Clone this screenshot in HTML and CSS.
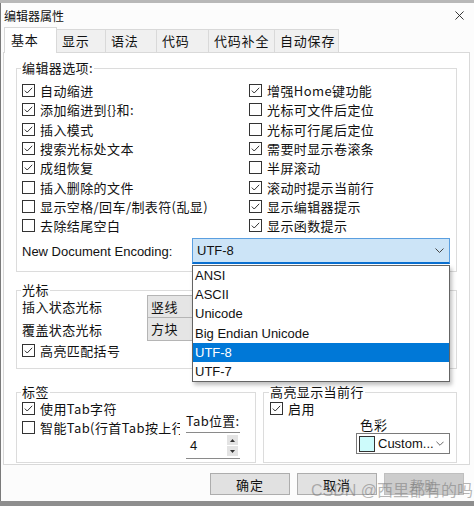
FILE: index.html
```html
<!DOCTYPE html>
<html lang="zh">
<head>
<meta charset="utf-8">
<title>编辑器属性</title>
<link rel="stylesheet" href="styles.css">
</head>
<body>
<div class="screen">
  <div class="topstrip"></div>
  <div class="dialog">
    <div class="titlebar">
      <span class="title">编辑器属性</span>
      <svg class="close" viewBox="0 0 10 10"><path d="M0.5 0.5L9.5 9.5M9.5 0.5L0.5 9.5" stroke="#222" stroke-width="1" fill="none"/></svg>
    </div>
    <div class="tabs">
      <div class="tab active t1">基本</div>
      <div class="tab t2">显示</div>
      <div class="tab t3">语法</div>
      <div class="tab t4">代码</div>
      <div class="tab t5">代码补全</div>
      <div class="tab t6">自动保存</div>
    </div>
    <div class="page">
      <fieldset class="grp g-editor">
        <legend>编辑器选项:</legend>
        <div class="checks">
          <label class="cbrow"><svg class="cb" viewBox="0 0 13 13"><rect x="0.5" y="0.5" width="12" height="12" fill="#fff" stroke="#333"/><path d="M2.8 6.6L5.2 9L10.2 3.8" fill="none" stroke="#333"/></svg>自动缩进</label>
          <label class="cbrow"><svg class="cb" viewBox="0 0 13 13"><rect x="0.5" y="0.5" width="12" height="12" fill="#fff" stroke="#333"/><path d="M2.8 6.6L5.2 9L10.2 3.8" fill="none" stroke="#333"/></svg>增强Home键功能</label>
          <label class="cbrow"><svg class="cb" viewBox="0 0 13 13"><rect x="0.5" y="0.5" width="12" height="12" fill="#fff" stroke="#333"/><path d="M2.8 6.6L5.2 9L10.2 3.8" fill="none" stroke="#333"/></svg>添加缩进到{}和:</label>
          <label class="cbrow"><svg class="cb" viewBox="0 0 13 13"><rect x="0.5" y="0.5" width="12" height="12" fill="#fff" stroke="#333"/></svg>光标可文件后定位</label>
          <label class="cbrow"><svg class="cb" viewBox="0 0 13 13"><rect x="0.5" y="0.5" width="12" height="12" fill="#fff" stroke="#333"/><path d="M2.8 6.6L5.2 9L10.2 3.8" fill="none" stroke="#333"/></svg>插入模式</label>
          <label class="cbrow"><svg class="cb" viewBox="0 0 13 13"><rect x="0.5" y="0.5" width="12" height="12" fill="#fff" stroke="#333"/></svg>光标可行尾后定位</label>
          <label class="cbrow"><svg class="cb" viewBox="0 0 13 13"><rect x="0.5" y="0.5" width="12" height="12" fill="#fff" stroke="#333"/><path d="M2.8 6.6L5.2 9L10.2 3.8" fill="none" stroke="#333"/></svg>搜索光标处文本</label>
          <label class="cbrow"><svg class="cb" viewBox="0 0 13 13"><rect x="0.5" y="0.5" width="12" height="12" fill="#fff" stroke="#333"/><path d="M2.8 6.6L5.2 9L10.2 3.8" fill="none" stroke="#333"/></svg>需要时显示卷滚条</label>
          <label class="cbrow"><svg class="cb" viewBox="0 0 13 13"><rect x="0.5" y="0.5" width="12" height="12" fill="#fff" stroke="#333"/><path d="M2.8 6.6L5.2 9L10.2 3.8" fill="none" stroke="#333"/></svg>成组恢复</label>
          <label class="cbrow"><svg class="cb" viewBox="0 0 13 13"><rect x="0.5" y="0.5" width="12" height="12" fill="#fff" stroke="#333"/></svg>半屏滚动</label>
          <label class="cbrow"><svg class="cb" viewBox="0 0 13 13"><rect x="0.5" y="0.5" width="12" height="12" fill="#fff" stroke="#333"/></svg>插入删除的文件</label>
          <label class="cbrow"><svg class="cb" viewBox="0 0 13 13"><rect x="0.5" y="0.5" width="12" height="12" fill="#fff" stroke="#333"/><path d="M2.8 6.6L5.2 9L10.2 3.8" fill="none" stroke="#333"/></svg>滚动时提示当前行</label>
          <label class="cbrow"><svg class="cb" viewBox="0 0 13 13"><rect x="0.5" y="0.5" width="12" height="12" fill="#fff" stroke="#333"/></svg>显示空格/回车/制表符(乱显)</label>
          <label class="cbrow"><svg class="cb" viewBox="0 0 13 13"><rect x="0.5" y="0.5" width="12" height="12" fill="#fff" stroke="#333"/><path d="M2.8 6.6L5.2 9L10.2 3.8" fill="none" stroke="#333"/></svg>显示编辑器提示</label>
          <label class="cbrow"><svg class="cb" viewBox="0 0 13 13"><rect x="0.5" y="0.5" width="12" height="12" fill="#fff" stroke="#333"/></svg>去除结尾空白</label>
          <label class="cbrow"><svg class="cb" viewBox="0 0 13 13"><rect x="0.5" y="0.5" width="12" height="12" fill="#fff" stroke="#333"/><path d="M2.8 6.6L5.2 9L10.2 3.8" fill="none" stroke="#333"/></svg>显示函数提示</label>
        </div>
        <div class="enc">
          <span class="enc-label">New Document Encoding:</span>
          <div class="select">
            <span>UTF-8</span>
            <svg class="chev" viewBox="0 0 9 5"><path d="M0.5 0.5L4.5 4.5L8.5 0.5" fill="none" stroke="#444"/></svg>
          </div>
        </div>
      </fieldset>

      <fieldset class="grp g-cursor">
        <legend>光标</legend>
        <div class="crow first">
          <span class="crow-label">插入状态光标</span>
          <div class="combo">竖线</div>
        </div>
        <div class="crow">
          <span class="crow-label">覆盖状态光标</span>
          <div class="combo">方块</div>
        </div>
        <label class="cbrow"><svg class="cb" viewBox="0 0 13 13"><rect x="0.5" y="0.5" width="12" height="12" fill="#fff" stroke="#333"/><path d="M2.8 6.6L5.2 9L10.2 3.8" fill="none" stroke="#333"/></svg>高亮匹配括号</label>
      </fieldset>

      <div class="bottom-groups">
        <fieldset class="grp g-tabs">
          <legend>标签</legend>
          <div class="tabs-body">
            <div class="tabs-left">
              <label class="cbrow"><svg class="cb" viewBox="0 0 13 13"><rect x="0.5" y="0.5" width="12" height="12" fill="#fff" stroke="#333"/><path d="M2.8 6.6L5.2 9L10.2 3.8" fill="none" stroke="#333"/></svg>使用Tab字符</label>
              <label class="cbrow"><svg class="cb" viewBox="0 0 13 13"><rect x="0.5" y="0.5" width="12" height="12" fill="#fff" stroke="#333"/></svg>智能Tab(行首Tab按上行</label>
            </div>
            <div class="tabs-right">
              <div class="tabpos-label">Tab位置:</div>
              <div class="spin">
                <span class="spin-val">4</span>
                <div class="spin-btns">
                  <span class="spin-btn"><svg viewBox="0 0 5 3"><path d="M0 3L2.5 0L5 3Z" fill="#333"/></svg></span>
                  <span class="spin-btn"><svg viewBox="0 0 5 3"><path d="M0 0L2.5 3L5 0Z" fill="#333"/></svg></span>
                </div>
              </div>
            </div>
          </div>
        </fieldset>
        <fieldset class="grp g-hl">
          <legend>高亮显示当前行</legend>
          <label class="cbrow"><svg class="cb" viewBox="0 0 13 13"><rect x="0.5" y="0.5" width="12" height="12" fill="#fff" stroke="#333"/><path d="M2.8 6.6L5.2 9L10.2 3.8" fill="none" stroke="#333"/></svg>启用</label>
          <div class="color-block">
            <div class="color-label">色彩</div>
            <div class="colorsel">
              <span class="swatch"></span>
              <span class="custom">Custom...</span>
              <svg class="chev small" viewBox="0 0 9 5"><path d="M0.5 0.5L4.5 4.5L8.5 0.5" fill="none" stroke="#555"/></svg>
            </div>
          </div>
        </fieldset>
      </div>
    </div>
    <div class="buttons">
      <button class="btn">确定</button>
      <button class="btn">取消</button>
      <button class="btn disabled">帮助</button>
    </div>
  </div>
  <div class="bottomstrip"></div>

  <div class="dropdown">
    <div class="opt">ANSI</div>
    <div class="opt">ASCII</div>
    <div class="opt">Unicode</div>
    <div class="opt">Big Endian Unicode</div>
    <div class="opt sel">UTF-8</div>
    <div class="opt">UTF-7</div>
  </div>

  <div class="watermark">CSDN @西里都有的吗</div>
</div>
</body>
</html>
```

FILE: styles.css
```css
* { box-sizing: border-box; }

html, body {
  margin: 0;
  padding: 0;
}

body {
  width: 474px;
  height: 506px;
  overflow: hidden;
  font-family: "Noto Sans CJK SC", "Liberation Sans", sans-serif;
  font-size: 13px;
  color: #111;
  background: #fff;
}

.screen {
  position: relative;
  width: 474px;
  height: 506px;
  display: flex;
  flex-direction: column;
}

.topstrip {
  height: 3px;
  background: #b8b8b8;
}

.dialog {
  flex: 1;
  display: flex;
  flex-direction: column;
  background: #fcfcfc;
  border-left: 1px solid #7a7a7a;
}

.bottomstrip {
  height: 5px;
  background: #8e8e8e;
}

/* title bar */
.titlebar {
  height: 24px;
  display: flex;
  align-items: center;
  justify-content: space-between;
  padding: 0 10px 0 3px;
  font-size: 12px;
}

.close {
  width: 9px;
  height: 9px;
}

/* tabs */
.tabs {
  display: flex;
  align-items: flex-end;
  height: 25px;
  padding-left: 3px;
}

.tab {
  height: 23px;
  border: 1px solid #d9d9d9;
  border-bottom: none;
  background: #f0f0f0;
  margin-left: -1px;
  padding: 2px 0 0 5px;
  line-height: 18px;
  letter-spacing: 0.8px;
  white-space: nowrap;
}

.tab.active {
  height: 26px;
  margin-left: 0;
  margin-bottom: -1px;
  padding: 3px 0 0 6px;
  background: #fff;
  position: relative;
  z-index: 1;
}

.t1 { width: 53px; }
.t2 { width: 50px; }
.t3 { width: 52px; }
.t4 { width: 53px; }
.t5 { width: 67px; }
.t6 { width: 65px; }

/* page */
.page {
  margin: 0 4px 0 2px;
  border: 1px solid #d9d9d9;
  background: #fff;
  padding: 0 0 1px 0;
}

.grp {
  margin: 0;
  padding: 0;
  min-width: 0;
  border: 1px solid #dcdcdc;
}

.grp legend {
  padding: 0 1px;
  margin-left: -1px;
  line-height: 14px;
  letter-spacing: 0.4px;
}

.g-editor {
  margin: 7px 12px 0 12px;
  padding: 5px 6px 7px 5px;
}

.g-editor legend {
  line-height: 16px;
}

.checks {
  display: grid;
  grid-template-columns: 227px 1fr;
  grid-auto-rows: 19.3px;
}

.cbrow {
  display: flex;
  align-items: center;
  gap: 5px;
  white-space: nowrap;
  letter-spacing: 0.4px;
  height: 19px;
}

.checks .cbrow {
  height: auto;
}

.cb {
  width: 13px;
  height: 13px;
  flex: none;
  display: block;
}

.enc {
  display: flex;
  align-items: center;
  height: 26px;
  margin-top: 3px;
}

.enc-label {
  width: 170px;
  font-family: "Liberation Sans", sans-serif;
  font-size: 13px;
}

.select {
  width: 258px;
  height: 26px;
  display: flex;
  align-items: center;
  justify-content: space-between;
  padding: 0 5px 0 4px;
  background: #cce4f7;
  border: 1px solid #5a9fe0;
  border-bottom: 2px solid #0a6fd0;
  font-family: "Liberation Sans", sans-serif;
  font-size: 13px;
}

.chev {
  width: 9px;
  height: 5px;
  display: block;
}

/* cursor group */
.g-cursor {
  margin: 11px 12px 0 12px;
  padding: 0 6px 8px 5px;
}

.crow {
  display: flex;
  align-items: center;
  height: 23px;
}

.crow.first {
  margin-top: -2px;
}

.crow-label {
  width: 125px;
  letter-spacing: 0.4px;
}

.combo {
  width: 100px;
  height: 23px;
  background: #e5e5e5;
  border: 1px solid #b5b5b5;
  padding-left: 3px;
  line-height: 21px;
  letter-spacing: 0.6px;
}

.crow + .crow .combo {
  border-top: none;
}

/* bottom groups */
.bottom-groups {
  display: flex;
  gap: 7px;
  margin: 16px 12px 0 12px;
}

.g-tabs {
  width: 240px;
  padding: 0 0 3px 5px;
}

.tabs-body {
  display: flex;
}

.tabs-left {
  width: 158px;
  overflow: hidden;
}

.tabs-right {
  margin-left: 6px;
  padding-top: 14px;
}

.tabpos-label {
  line-height: 16px;
  letter-spacing: 0.3px;
}

.spin {
  width: 54px;
  height: 27px;
  margin-top: 3px;
  border-top: 1px solid #8a8a8a;
  border-bottom: 1px solid #8a8a8a;
  display: flex;
  align-items: center;
  justify-content: space-between;
  padding: 0 2px 0 4px;
  font-family: "Liberation Sans", sans-serif;
}

.spin-btns {
  display: flex;
  flex-direction: column;
  gap: 1px;
}

.spin-btn {
  width: 11px;
  height: 10px;
  background: #e3e3e3;
  display: flex;
  align-items: center;
  justify-content: center;
}

.spin-btn svg {
  width: 5px;
  height: 3px;
  display: block;
}

.g-hl {
  flex: 1;
  padding: 0 0 3px 6px;
}

.color-block {
  margin-left: 86px;
}

.color-label {
  padding-left: 4px;
  line-height: 14px;
  letter-spacing: 1px;
}

.colorsel {
  width: 94px;
  height: 21px;
  margin-top: 1px;
  border: 1px solid #7a7a7a;
  background: #fff;
  display: flex;
  align-items: center;
  padding: 0 5px 0 2px;
}

.swatch {
  width: 16px;
  height: 16px;
  background: #cdfbfb;
  border: 1px solid #333;
  margin-right: 3px;
  flex: none;
}

.custom {
  font-family: "Liberation Sans", sans-serif;
  font-size: 13px;
}

.chev.small {
  width: 8px;
  height: 5px;
  margin-left: auto;
}

/* buttons */
.buttons {
  display: flex;
  justify-content: flex-end;
  gap: 7px;
  padding: 8px 10px 0 0;
}

.btn {
  width: 80px;
  height: 22px;
  background: #e1e1e1;
  border: 1px solid #adadad;
  font-family: "Noto Sans CJK SC", sans-serif;
  font-size: 13px;
  letter-spacing: 1px;
  color: #111;
  padding: 0;
}

.btn.disabled {
  background: #cccccc;
  border-color: #bfbfbf;
  color: #a0a0a0;
}

/* open dropdown list */
.dropdown {
  position: absolute;
  left: 192px;
  top: 265px;
  width: 258px;
  border: 1px solid #646464;
  background: #fff;
  box-shadow: 2px 3px 4px rgba(0, 0, 0, 0.25);
  font-family: "Liberation Sans", sans-serif;
  font-size: 13px;
  z-index: 5;
}

.opt {
  height: 19.2px;
  line-height: 19.2px;
  padding-left: 2px;
}

.opt.sel {
  background: #0078d7;
  color: #fff;
}

.watermark {
  position: absolute;
  left: 311px;
  top: 481px;
  font-family: "Liberation Sans", "Noto Sans CJK SC", sans-serif;
  font-size: 16px;
  line-height: 20px;
  color: rgba(120, 120, 120, 0.55);
  white-space: nowrap;
  z-index: 6;
}
```
